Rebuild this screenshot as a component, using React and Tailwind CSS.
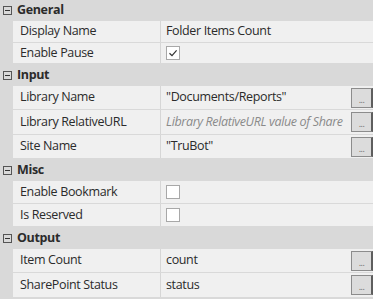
import React from 'react';

const sections = [
  {
    title: 'General',
    h: 'h-[21px]',
    rows: [
      { label: 'Display Name', value: 'Folder Items Count', h: 'h-[22px]' },
      { label: 'Enable Pause', check: true, h: 'h-[21px]' },
    ],
  },
  {
    title: 'Input',
    h: 'h-[22px]',
    rows: [
      { label: 'Library Name', value: '"Documents/Reports"', btn: true, h: 'h-[24px]' },
      { label: 'Library RelativeURL', placeholder: 'Library RelativeURL value of Share', btn: true, h: 'h-[25px]' },
      { label: 'Site Name', value: '"TruBot"', btn: true, h: 'h-[24px]' },
    ],
  },
  {
    title: 'Misc',
    h: 'h-[22px]',
    rows: [
      { label: 'Enable Bookmark', check: false, h: 'h-[23px]' },
      { label: 'Is Reserved', check: false, h: 'h-[23px]' },
    ],
  },
  {
    title: 'Output',
    h: 'h-[22px]',
    rows: [
      { label: 'Item Count', value: 'count', btn: true, h: 'h-[24px]' },
      { label: 'SharePoint Status', value: 'status', btn: true, h: 'h-[25px]' },
    ],
  },
];

const Checkbox = ({ checked }) => (
  <span className="w-[14px] h-[14px] border border-[#a8a8a8] bg-white flex items-center justify-center">
    {checked && (
      <svg width="10" height="10" viewBox="0 0 10 10">
        <path d="M1.5 5.2 L4 7.6 L8.6 2.4" fill="none" stroke="#333" strokeWidth="1.2" />
      </svg>
    )}
  </span>
);

const DotsButton = () => (
  <div className="w-[22px] h-[20px] shrink-0 bg-[#dcdcdc] border border-[#8c8c8c] border-r-2 border-r-[#5e5e5e] flex items-end justify-center pb-[3px]">
    <span className="text-[9px] leading-none text-[#6a6a6a] tracking-[-0.5px]">...</span>
  </div>
);

const Row = ({ row }) => (
  <div className={`${row.h} flex bg-[#f0f0f0] border-b border-[#d9d9d9]`}>
    <div className="w-[148px] shrink-0 flex items-center pl-[7px] border-r border-[#d6d6d6] text-[#2b2b2b]">
      {row.label}
    </div>
    <div className="flex-1 min-w-0 flex items-center pl-[5px] gap-[3px]">
      {row.check !== undefined ? (
        <Checkbox checked={row.check} />
      ) : (
        <div className="flex-1 min-w-0 overflow-hidden whitespace-nowrap">
          {row.placeholder ? (
            <span className="italic text-[#8a8a8a]">{row.placeholder}</span>
          ) : (
            <span className="text-[#2b2b2b]">{row.value}</span>
          )}
        </div>
      )}
      {row.btn && <DotsButton />}
    </div>
  </div>
);

const App = () => {
  return (
    <div
      className="w-[373px] h-[299px] overflow-hidden bg-[#d9d9d9] text-[12.5px] tracking-[-0.35px]"
      style={{ fontFamily: '"Open Sans", "Noto Sans", sans-serif' }}
    >
      {sections.map((s) => (
        <div key={s.title}>
          <div className={`${s.h} flex items-center bg-[#d9d9d9]`}>
            <span className="ml-[3px] w-[9px] h-[9px] border border-[#555] flex items-center justify-center">
              <span className="w-[5px] h-px bg-[#333]" />
            </span>
            <span className="ml-[5px] font-bold text-[#2b2b2b]">{s.title}</span>
          </div>
          <div className="pl-[13px]">
            {s.rows.map((r) => (
              <Row key={r.label} row={r} />
            ))}
          </div>
        </div>
      ))}
    </div>
  );
};

export default App;
